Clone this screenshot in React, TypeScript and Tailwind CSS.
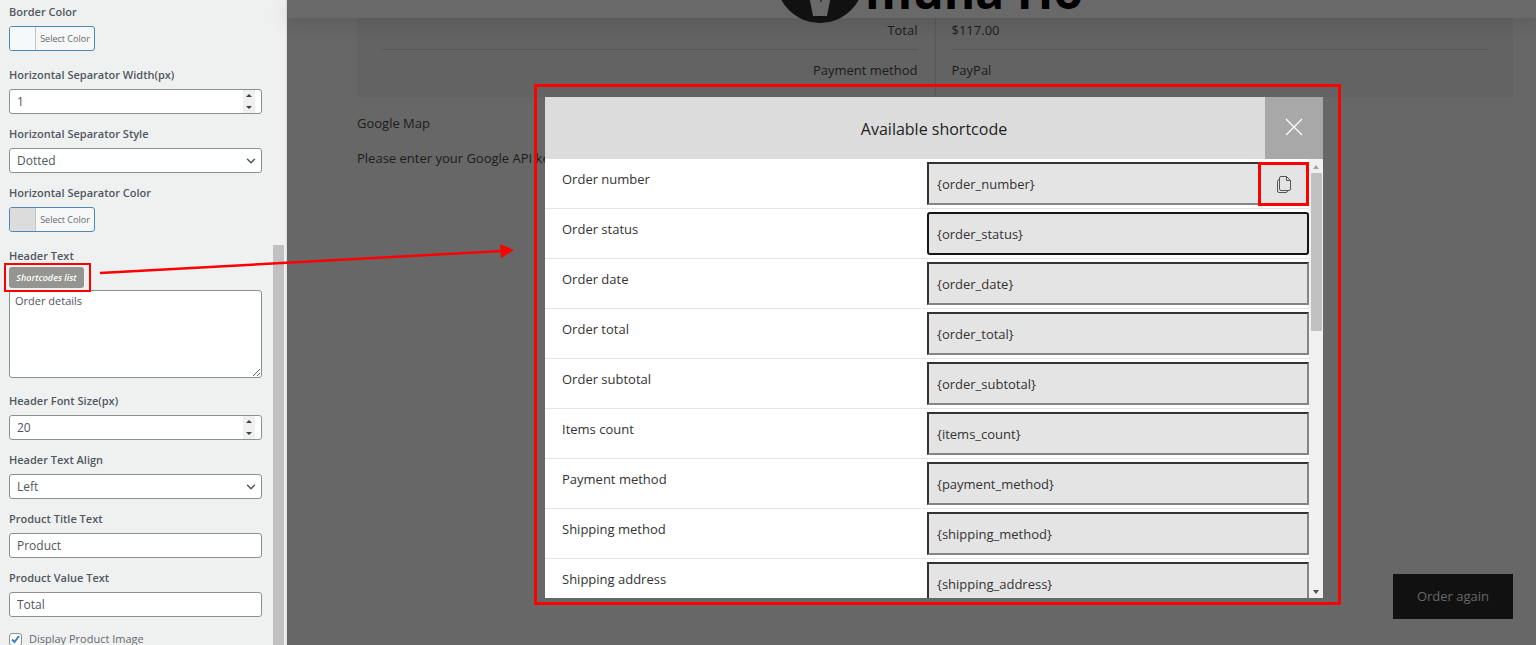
import { useState } from 'react';
import type { ReactNode } from 'react';
import { ChevronDown } from 'lucide-react';

const shortcodes = [
  { label: 'Order number', code: '{order_number}' },
  { label: 'Order status', code: '{order_status}' },
  { label: 'Order date', code: '{order_date}' },
  { label: 'Order total', code: '{order_total}' },
  { label: 'Order subtotal', code: '{order_subtotal}' },
  { label: 'Items count', code: '{items_count}' },
  { label: 'Payment method', code: '{payment_method}' },
  { label: 'Shipping method', code: '{shipping_method}' },
  { label: 'Shipping address', code: '{shipping_address}' },
];

const controlClass =
  'block h-[25px] w-full rounded-[3px] border border-[#8c8f94] bg-white px-[7px] text-xs text-[#50575e] outline-none';

function Field({ id, label, children }: { id: string; label: string; children: ReactNode }) {
  return (
    <div>
      <label htmlFor={id} className="mb-1 block text-[11px] leading-5 font-semibold text-[#50575e]">
        {label}
      </label>
      {children}
    </div>
  );
}

function ColorField({ id, label, swatch }: { id: string; label: string; swatch: string }) {
  return (
    <div className="mb-1">
      <Field id={id} label={label}>
        <button
          id={id}
          type="button"
          className="flex h-[25px] w-[86px] overflow-hidden rounded-[3px] border border-[#4f88b5] bg-[#f6f7f7]"
        >
          <span className={`h-full w-[26px] shrink-0 border-r border-[#c3c4c7] ${swatch}`} />
          <span className="flex-1 text-center text-[9px] leading-[23px] whitespace-nowrap text-[#646970]">
            Select Color
          </span>
        </button>
      </Field>
    </div>
  );
}

function NumberField({ id, label, initial }: { id: string; label: string; initial: number }) {
  const [value, setValue] = useState(initial);

  return (
    <Field id={id} label={label}>
      <div className="relative">
        <input
          id={id}
          type="number"
          value={value}
          onChange={(e) => setValue(Number(e.target.value))}
          className={`${controlClass} [appearance:textfield] [&::-webkit-inner-spin-button]:appearance-none`}
        />
        <div className="absolute inset-y-px right-[7px] flex w-3 flex-col bg-[#f0f0f0]">
          <button
            type="button"
            aria-label="Increase"
            onClick={() => setValue(value + 1)}
            className="flex flex-1 items-center justify-center"
          >
            <svg width="6" height="3" viewBox="0 0 6 3" fill="#404040"><path d="M0 3L3 0L6 3Z" /></svg>
          </button>
          <button
            type="button"
            aria-label="Decrease"
            onClick={() => setValue(value - 1)}
            className="flex flex-1 items-center justify-center"
          >
            <svg width="6" height="3" viewBox="0 0 6 3" fill="#404040"><path d="M0 0L3 3L6 0Z" /></svg>
          </button>
        </div>
      </div>
    </Field>
  );
}

function SelectField({ id, label, options }: { id: string; label: string; options: string[] }) {
  return (
    <Field id={id} label={label}>
      <div className="relative">
        <select id={id} className={`${controlClass} appearance-none`}>
          {options.map((option) => (
            <option key={option}>{option}</option>
          ))}
        </select>
        <ChevronDown className="pointer-events-none absolute top-1.5 right-1 size-3.5 text-[#50575e]" strokeWidth={2.5} />
      </div>
    </Field>
  );
}

function Sidebar() {
  return (
    <aside className="flex w-[287px] shrink-0 border-r border-[#dcdcde] bg-[#eff1f1]">
      <div className="flex flex-1 flex-col gap-2.5 overflow-hidden pt-0.5 pr-[11px] pl-[9px]">
        <ColorField id="border-color" label="Border Color" swatch="bg-[#f6f9f9]" />
        <NumberField id="separator-width" label="Horizontal Separator Width(px)" initial={1} />
        <SelectField id="separator-style" label="Horizontal Separator Style" options={['Dotted', 'Solid', 'Dashed']} />
        <ColorField id="separator-color" label="Horizontal Separator Color" swatch="bg-[#dcdcdc]" />
        <div className="mb-[3px]">
          <label htmlFor="header-text" className="block text-[11px] leading-5 font-semibold text-[#50575e]">
            Header Text
          </label>
          <div className="relative mt-px mb-0.5 w-fit">
            <button
              type="button"
              className="block h-[21px] w-[75px] rounded-[3px] bg-[#949490] text-center text-[9px] font-semibold whitespace-nowrap text-white italic"
            >
              Shortcodes list
            </button>
            <div className="pointer-events-none absolute -inset-y-1 -left-[5px] z-10 w-[87px] border-2 border-[#fe0000]" />
          </div>
          <textarea
            id="header-text"
            defaultValue="Order details"
            className="block h-[88px] w-full rounded-[3px] border border-[#8c8f94] bg-white px-[5px] py-0.5 text-[11px] leading-4 text-[#50575e] outline-none"
          />
        </div>
        <NumberField id="header-size" label="Header Font Size(px)" initial={20} />
        <SelectField id="header-align" label="Header Text Align" options={['Left', 'Center', 'Right']} />
        <Field id="product-title" label="Product Title Text">
          <input id="product-title" type="text" defaultValue="Product" className={controlClass} />
        </Field>
        <Field id="product-value" label="Product Value Text">
          <input id="product-value" type="text" defaultValue="Total" className={controlClass} />
        </Field>
        <div className="mt-0.5 flex shrink-0 items-center gap-[7px] text-[11px] leading-5 text-[#646970]">
          <span className="relative size-[13px]">
            <input
              id="display-image"
              type="checkbox"
              defaultChecked
              className="peer block size-full appearance-none rounded-[3px] border border-[#8c8f94] bg-white"
            />
            <svg
              className="pointer-events-none absolute inset-0.5 hidden text-[#3582c4] peer-checked:block"
              width="9"
              height="9"
              viewBox="0 0 9 9"
              fill="none"
              stroke="currentColor"
              strokeWidth="2"
            >
              <path d="M1 4.5L3.5 7L8 1" />
            </svg>
          </span>
          <label htmlFor="display-image">Display Product Image</label>
        </div>
      </div>
      <div className="w-[13px] bg-[#f0f0f0] pt-[245px]">
        <div className="h-full w-[11px] bg-[#c1c1c1]" />
      </div>
    </aside>
  );
}

function Logo() {
  return (
    <div className="absolute bottom-[-5px] left-[488px] z-10 flex items-end">
      <svg width="90" height="88" viewBox="0 0 90 88">
        <circle cx="45" cy="44" r="44" fill="#111" />
        <path d="M28 30L38 81L52 81L62 30H54L46 68L36 30Z" fill="#696969" />
      </svg>
      <span className="pb-1 text-5xl leading-[56px] font-bold whitespace-nowrap text-black">muna Ho</span>
    </div>
  );
}

function OrderPage() {
  return (
    <div className="flex h-full flex-col bg-[#676767] text-[13px] text-[#1c1c1c]">
      <header className="relative h-[18px] shrink-0 bg-[#696969] shadow-[0_4px_20px_rgba(0,0,0,0.12)]">
        <Logo />
      </header>
      <table className="mr-[23px] ml-[70px] table-fixed bg-[#636363] leading-6">
        <tbody>
          <tr>
            <th scope="row" className="w-1/2 border-r border-[#585858] pr-[17px] pl-6 text-right font-normal">
              <div className="border-b border-[#585858] pb-[7px]">Total</div>
            </th>
            <td className="pr-6 pl-4">
              <div className="border-b border-[#585858] pb-[7px]">$117.00</div>
            </td>
          </tr>
          <tr>
            <th scope="row" className="border-r border-[#585858] pt-2 pr-[17px] pb-[15px] text-right font-normal">
              Payment method
            </th>
            <td className="pt-2 pb-[15px] pl-4">PayPal</td>
          </tr>
        </tbody>
      </table>
      <p className="mt-4 ml-[70px] leading-5">Google Map</p>
      <p className="mt-[15px] ml-[70px] leading-5">Please enter your Google API key</p>
      <button type="button" className="mt-auto mr-[23px] mb-[26px] h-[45px] w-[120px] self-end bg-[#111] text-[#676767]">
        Order again
      </button>
    </div>
  );
}

function CopyIcon() {
  return (
    <svg width="16" height="19" viewBox="0 0 16 19" fill="none" stroke="#555">
      <path d="M5 1.5H10.5L14.5 5.5V14Q14.5 15.5 13 15.5H5Q3.5 15.5 3.5 14V3Q3.5 1.5 5 1.5Z" />
      <path d="M10.5 1.5V5.5H14.5M3.5 4.5Q1.5 4.5 1.5 6.5V16Q1.5 17.5 3 17.5H10Q11.5 17.5 11.5 15.5" />
    </svg>
  );
}

function ShortcodeModal() {
  return (
    <section
      role="dialog"
      aria-labelledby="shortcode-title"
      className="absolute top-[97px] right-[213px] bottom-[47px] left-[258px] flex flex-col bg-white"
    >
      <header className="flex h-[62px] shrink-0 bg-[#dcdcdc]">
        <h2 id="shortcode-title" className="flex flex-1 items-center justify-center pt-0.5 pl-[58px] text-base text-[#222]">
          Available shortcode
        </h2>
        <button type="button" aria-label="Close" className="flex w-[58px] items-center justify-center bg-[#a8a8a8] pb-0.5">
          <svg width="18" height="18" viewBox="0 0 18 18" stroke="#fff" strokeWidth="1.2">
            <path d="M1 1L17 17M17 1L1 17" />
          </svg>
        </button>
      </header>
      <div className="flex min-h-0 flex-1">
        <div className="flex-1 overflow-hidden text-[13px] text-[#333]">
          {shortcodes.map(({ label, code }, index) => (
            <div key={code} className="flex h-[50px] border-b border-[#e5e5e5] pl-[17px]">
              <label htmlFor={code} className="flex-1 pt-2.5 leading-5">{label}</label>
              <div className="relative mt-[3px] h-[43px] w-[382px]">
                <input
                  id={code}
                  readOnly
                  value={code}
                  className={
                    index === 1
                      ? 'size-full rounded-[3px] border-2 border-[#161616] bg-[#e4e4e4] px-2 outline-none'
                      : 'size-full border-2 border-t-[#333] border-r-[#858585] border-b-[#858585] border-l-[#333] bg-[#e4e4e4] px-2 outline-none'
                  }
                />
                {index === 0 && (
                  <button
                    type="button"
                    aria-label="Copy shortcode"
                    className="absolute top-0 right-0 -bottom-px flex w-[51px] items-center justify-center border-[3px] border-[#fe0000]"
                  >
                    <CopyIcon />
                  </button>
                )}
              </div>
            </div>
          ))}
        </div>
        <div className="flex w-3.5 flex-col items-center justify-between bg-[#f0f0f0] pt-1.5 pb-1">
          <svg width="6" height="4" viewBox="0 0 6 4" fill="#a3a3a3"><path d="M0 4L3 0L6 4Z" /></svg>
          <div className="mt-1 mb-auto h-[158px] w-[11px] bg-[#c1c1c1]" />
          <svg width="6" height="4" viewBox="0 0 6 4" fill="#505050"><path d="M0 0L3 4L6 0Z" /></svg>
        </div>
      </div>
    </section>
  );
}

export default function App() {
  return (
    <div className="relative flex h-screen overflow-hidden font-['Open_Sans','Noto_Sans',sans-serif]">
      <Sidebar />
      <main className="relative min-w-0 flex-1">
        <OrderPage />
        <ShortcodeModal />
        <div className="pointer-events-none absolute top-[84px] right-[195px] bottom-10 left-[247px] border-[3px] border-[#fe0000]" />
      </main>
      <svg className="pointer-events-none absolute top-60 left-[100px] z-20" width="416" height="36" viewBox="0 0 416 36">
        <path d="M0 33L402 11" stroke="#fe0000" strokeWidth="2.5" />
        <path d="M400 4L414 10L401 18Z" fill="#fe0000" />
      </svg>
    </div>
  );
}
